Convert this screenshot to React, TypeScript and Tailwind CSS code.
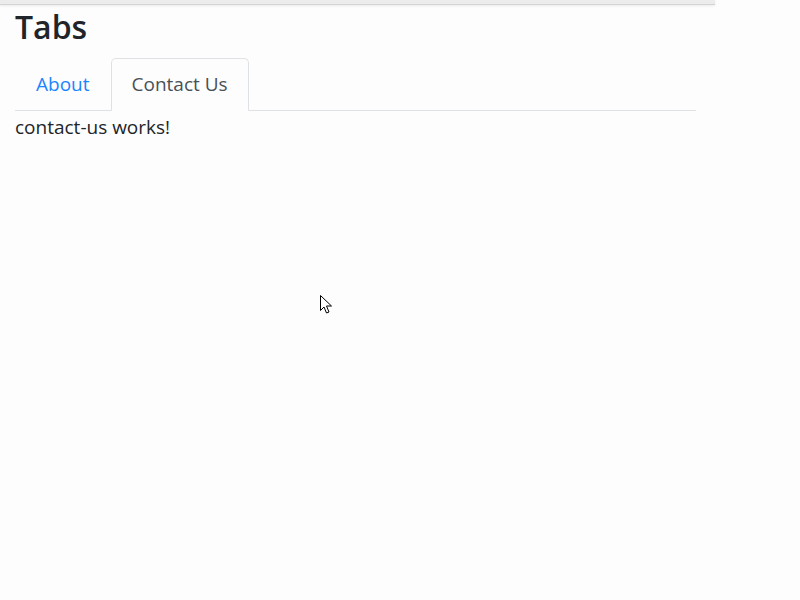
import { useState } from "react"

// tab bar demo — bootstrap-ish nav-tabs look
const TABS = [
  { key: "about", label: "About", body: "about works!" },
  { key: "contact-us", label: "Contact Us", body: "contact-us works!" },
]

export default function App() {
  const [active, setActive] = useState("contact-us")
  const current = TABS.find((t) => t.key === active)!

  return (
    <div className="relative h-[600px] w-[800px] overflow-hidden bg-[#fdfdfd] font-['Open_Sans','Noto_Sans',sans-serif] text-[#212529]">
      {/* thin grey strip at the top */}
      <div className="h-[5px] w-[715px] border-b border-[#d4d4d4] bg-[#ececec] shadow-[0_1px_3px_rgba(0,0,0,0.08)]" />

      <div className="w-[696px] pl-[15px]">
        <h2 className="mb-[9px] text-[32px] font-semibold leading-[44px]">Tabs</h2>

        <ul className="flex border-b border-[#dee2e6]">
          {TABS.map((t) => (
            <li key={t.key} className="-mb-px">
              <button
                onClick={() => setActive(t.key)}
                className={`block h-[53px] rounded-t-[5px] border px-[20px] text-[19px] ${
                  t.key === active
                    ? "border-[#dee2e6] border-b-[#fdfdfd] bg-[#fdfdfd] text-[#495057]"
                    : "border-transparent text-[#1a85ff]"
                }`}
              >
                {t.label}
              </button>
            </li>
          ))}
        </ul>

        <p className="text-[19px] leading-[32px]">{current.body}</p>
      </div>

      {/* mouse pointer */}
      <svg
        className="absolute left-[320px] top-[295px]"
        width="13"
        height="20"
        viewBox="0 0 13 20"
      >
        <path
          d="M0.5 0.5 L0.5 15.5 L4 12 L6.5 18 L9 17 L6.5 11 L11.5 11 Z"
          fill="#fff"
          stroke="#000"
          strokeWidth="1"
          strokeLinejoin="miter"
        />
      </svg>
    </div>
  )
}
